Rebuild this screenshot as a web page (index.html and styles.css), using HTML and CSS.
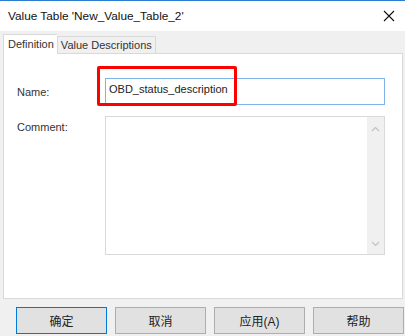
FILE: index.html
```html
<!DOCTYPE html>
<html lang="en">

<head>
    <meta charset="UTF-8">
    <meta name="viewport" content="width=device-width, initial-scale=1.0">
    <title>Value Table</title>
    <link rel="stylesheet" href="styles.css">
</head>

<body>
    <div class="window">
        <div class="titlebar">
            <span class="title">Value Table 'New_Value_Table_2'</span>
            <svg class="close" width="12" height="12" viewBox="0 0 12 12">
                <path d="M1 1 L11 11 M11 1 L1 11" stroke="#111" stroke-width="1.1" fill="none" />
            </svg>
        </div>

        <div class="tabs">
            <div class="tab active">Definition</div>
            <div class="tab">Value Descriptions</div>
        </div>

        <div class="panel">
            <div class="row row-name">
                <label for="name">Name:</label>
                <div class="field">
                    <input type="text" id="name" value="OBD_status_description">
                    <div class="highlight"></div>
                </div>
            </div>

            <div class="row row-comment">
                <label for="comment">Comment:</label>
                <div class="memo">
                    <div class="memo-text" id="comment"></div>
                    <div class="scrollbar">
                        <svg width="9" height="6" viewBox="0 0 9 6">
                            <path d="M1 5 L4.5 1.5 L8 5" stroke="#c2c2c2" stroke-width="1.2" fill="none" />
                        </svg>
                        <svg width="9" height="6" viewBox="0 0 9 6">
                            <path d="M1 1 L4.5 4.5 L8 1" stroke="#c2c2c2" stroke-width="1.2" fill="none" />
                        </svg>
                    </div>
                </div>
            </div>
        </div>

        <div class="buttons">
            <button class="default">确定</button>
            <button>取消</button>
            <button>应用(A)</button>
            <button>帮助</button>
        </div>
    </div>
</body>

</html>
```

FILE: styles.css
```css
* {
    margin: 0;
    padding: 0;
    box-sizing: border-box;
    font-family: 'Liberation Sans', Arial, 'Noto Sans CJK SC', sans-serif;
}

body {
    width: 405px;
    height: 336px;
    overflow: hidden;
    background: #f0f0f0;
}

.window {
    height: 336px;
    border-top: 1px solid #2b7cd3;
}

.titlebar {
    height: 30px;
    background: white;
    display: flex;
    justify-content: space-between;
    align-items: center;
    padding: 0 8px 0 8px;
}

.title {
    font-size: 11.8px;
    color: #111;
}

.close {
    margin-right: 2px;
}

.tabs {
    display: flex;
    align-items: flex-end;
    height: 22px;
    padding-left: 3px;
}

.tab {
    font-size: 11px;
    color: #333;
    height: 17px;
    padding: 0 3px;
    line-height: 16px;
    background: #f0f0f0;
    border: 1px solid #d9d9d9;
    border-bottom: none;
}

.tab.active {
    height: 20px;
    line-height: 18px;
    background: white;
    border-right: none;
    margin-bottom: -1px;
    position: relative;
    z-index: 1;
    padding: 0 3px 0 4px;
}

.panel {
    height: 246px;
    margin: 0 2px 0 3px;
    background: white;
    border: 1px solid #d9d9d9;
    padding: 24px 17px 0 13px;
}

.row {
    display: flex;
}

.row label {
    width: 88px;
    font-size: 11px;
    color: #333;
}

.row-name {
    align-items: center;
    height: 27px;
}

.field {
    flex: 1;
    position: relative;
}

.field input {
    width: 100%;
    height: 27px;
    border: 1px solid #7eb4ea;
    padding: 0 3px 5px 3px;
    font-size: 11px;
    color: #222;
    outline: none;
}

.highlight {
    position: absolute;
    left: -8px;
    top: -12px;
    width: 140px;
    height: 40px;
    border: 3.5px solid #ff0000;
    border-radius: 2px;
}

.row-comment {
    margin-top: 11px;
}

.row-comment label {
    padding-top: 5px;
}

.memo {
    flex: 1;
    height: 139px;
    border: 1px solid #d9d9d9;
    display: flex;
}

.memo-text {
    flex: 1;
}

.scrollbar {
    width: 17px;
    background: #f0f0f0;
    display: flex;
    flex-direction: column;
    justify-content: space-between;
    align-items: center;
    padding: 9px 0 7px 0;
}

.buttons {
    display: flex;
    gap: 8px;
    padding: 8px 1px 0 16px;
}

button {
    width: 91px;
    height: 27px;
    background: #e1e1e1;
    border: 1px solid #adadad;
    font-size: 12px;
    color: #222;
}

button.default {
    border: 1px solid #0078d7;
}
```
